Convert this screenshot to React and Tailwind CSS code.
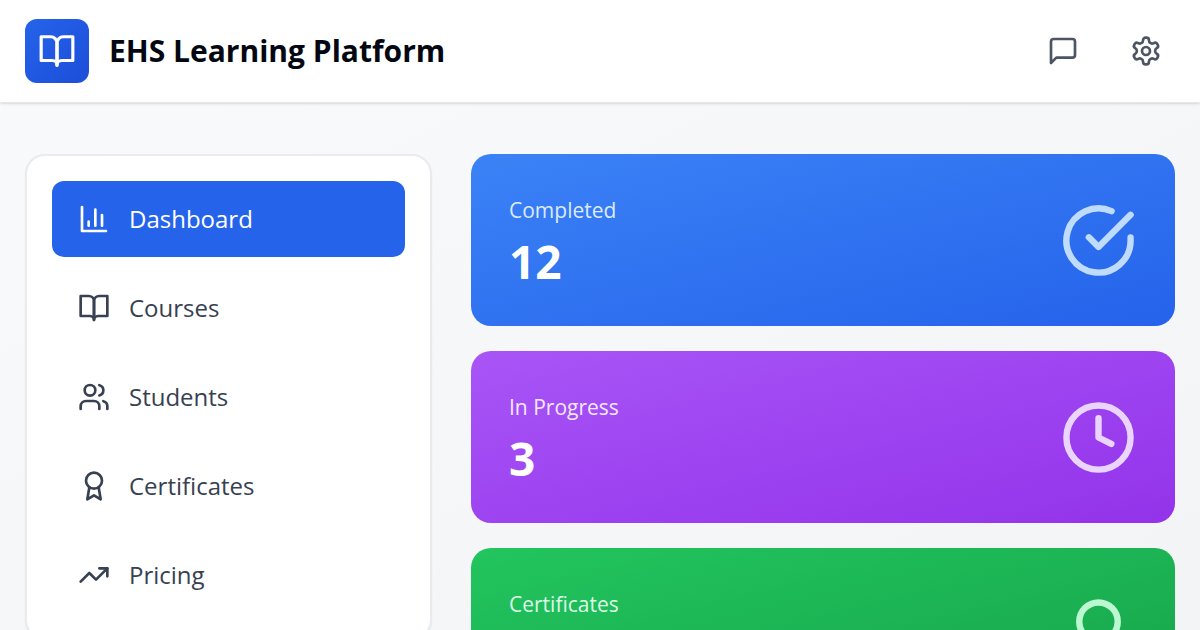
function Icon({ className, strokeWidth = 2, children }) {
  return (
    <svg
      className={className}
      viewBox="0 0 24 24"
      fill="none"
      stroke="currentColor"
      strokeWidth={strokeWidth}
      strokeLinecap="round"
      strokeLinejoin="round"
      aria-hidden="true"
    >
      {children}
    </svg>
  );
}

const book = (
  <>
    <path d="M2 3h6a4 4 0 0 1 4 4v14a3 3 0 0 0-3-3H2z" />
    <path d="M22 3h-6a4 4 0 0 0-4 4v14a3 3 0 0 1 3-3h7z" />
  </>
);
const chart = (
  <>
    <path d="M3 3v18h18" />
    <path d="M18 17V9" />
    <path d="M13 17V5" />
    <path d="M8 17v-3" />
  </>
);
const users = (
  <>
    <path d="M16 21v-2a4 4 0 0 0-4-4H6a4 4 0 0 0-4 4v2" />
    <circle cx="9" cy="7" r="4" />
    <path d="M22 21v-2a4 4 0 0 0-3-3.87" />
    <path d="M16 3.13a4 4 0 0 1 0 7.75" />
  </>
);
const award = (
  <>
    <circle cx="12" cy="8" r="6" />
    <path d="M15.477 12.89 17 22l-5-3-5 3 1.523-9.11" />
  </>
);
const trending = (
  <>
    <polyline points="22 7 13.5 15.5 8.5 10.5 2 17" />
    <polyline points="16 7 22 7 22 13" />
  </>
);
const message = (
  <path d="M21 15a2 2 0 0 1-2 2H7l-4 4V5a2 2 0 0 1 2-2h14a2 2 0 0 1 2 2z" />
);
const gear = (
  <>
    <path d="M12.22 2h-.44a2 2 0 0 0-2 2v.18a2 2 0 0 1-1 1.73l-.43.25a2 2 0 0 1-2 0l-.15-.08a2 2 0 0 0-2.73.73l-.22.38a2 2 0 0 0 .73 2.73l.15.1a2 2 0 0 1 1 1.72v.51a2 2 0 0 1-1 1.74l-.15.09a2 2 0 0 0-.73 2.73l.22.38a2 2 0 0 0 2.73.73l.15-.08a2 2 0 0 1 2 0l.43.25a2 2 0 0 1 1 1.73V20a2 2 0 0 0 2 2h.44a2 2 0 0 0 2-2v-.18a2 2 0 0 1 1-1.73l.43-.25a2 2 0 0 1 2 0l.15.08a2 2 0 0 0 2.73-.73l.22-.39a2 2 0 0 0-.73-2.73l-.15-.08a2 2 0 0 1-1-1.74v-.5a2 2 0 0 1 1-1.74l.15-.09a2 2 0 0 0 .73-2.73l-.22-.38a2 2 0 0 0-2.73-.73l-.15.08a2 2 0 0 1-2 0l-.43-.25a2 2 0 0 1-1-1.73V4a2 2 0 0 0-2-2z" />
    <circle cx="12" cy="12" r="3" />
  </>
);
const check = (
  <>
    <path d="M22 11.08V12a10 10 0 1 1-5.93-9.14" />
    <path d="m9 11 3 3L22 4" />
  </>
);
const clock = (
  <>
    <circle cx="12" cy="12" r="10" />
    <polyline points="12 6 12 12 16 14" />
  </>
);

const navItems = [
  { label: "Dashboard", icon: chart, active: true },
  { label: "Courses", icon: book },
  { label: "Students", icon: users },
  { label: "Certificates", icon: award },
  { label: "Pricing", icon: trending },
];

const stats = [
  { label: "Completed", value: "12", icon: check, card: "from-[#3b82f6] to-[#2563eb]", tone: "text-[#dbeafe]", iconTone: "text-[#bfdbfe]" },
  { label: "In Progress", value: "3", icon: clock, card: "from-[#a855f7] to-[#9333ea]", tone: "text-[#f3e8ff]", iconTone: "text-[#e9d5ff]" },
  { label: "Certificates", value: "", icon: award, card: "from-[#22c55e] to-[#16a34a]", tone: "text-[#dcfce7]", iconTone: "text-[#bbf7d0]" },
];

export default function App() {
  return (
    <div className="h-screen overflow-hidden bg-linear-to-br/srgb from-[#f9fafb] to-[#f3f4f6] font-['Open_Sans','Noto_Sans',sans-serif]">
      <header className="flex items-center justify-between border-b border-[#e5e7eb] bg-white px-[25px] py-[19px] shadow-sm">
        <div className="flex items-center gap-5">
          <div className="flex size-16 items-center justify-center rounded-xl bg-linear-to-br/srgb from-[#2563eb] to-[#1d4ed8]">
            <Icon className="size-[38px] text-white">{book}</Icon>
          </div>
          <h1 className="text-[30px] leading-10 font-bold text-[#030712]">EHS Learning Platform</h1>
        </div>
        <div className="flex items-center gap-[25px]">
          <button type="button" aria-label="Messages" className="rounded-xl p-[13px] text-[#4b5563]">
            <Icon className="size-8">{message}</Icon>
          </button>
          <button type="button" aria-label="Settings" className="rounded-xl p-[13px] text-[#4b5563]">
            <Icon className="size-8">{gear}</Icon>
          </button>
        </div>
      </header>

      <main className="flex items-start gap-[39px] px-[25px] pt-[51px]">
        <aside className="w-[407px] shrink-0 rounded-[20px] border-2 border-[#e9ebee] bg-white p-[25px] shadow-xs">
          <nav className="flex flex-col gap-[13px]">
            {navItems.map(({ label, icon, active }) => (
              <button
                key={label}
                type="button"
                className={`flex h-[76px] w-full items-center gap-[19px] rounded-xl px-[26px] text-left text-2xl ${
                  active ? "bg-[#2563eb] text-white" : "text-[#374151]"
                }`}
              >
                <Icon className="size-8">{icon}</Icon>
                <span>{label}</span>
              </button>
            ))}
          </nav>
        </aside>

        <section className="flex min-w-0 flex-1 flex-col gap-[25px]">
          {stats.map(({ label, value, icon, card, tone, iconTone }) => (
            <article
              key={label}
              className={`flex h-[172px] items-center justify-between rounded-[20px] bg-linear-to-br/srgb px-[38px] ${card}`}
            >
              <div className="flex flex-col gap-[6px] pt-1">
                <p className={`text-[21px] leading-8 ${tone}`}>{label}</p>
                <p className="min-h-[58px] text-[46px] leading-[58px] font-bold text-white">{value}</p>
              </div>
              <Icon className={`size-[77px] ${iconTone}`}>{icon}</Icon>
            </article>
          ))}
        </section>
      </main>
    </div>
  );
}
